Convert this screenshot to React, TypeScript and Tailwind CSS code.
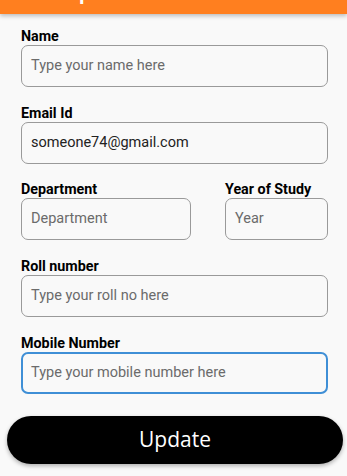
import React from "react";

function Label({ children }: { children: React.ReactNode }) {
  return (
    <div className="h-[17px] text-[14.3px] leading-[17px] font-bold text-black">
      {children}
    </div>
  );
}

function Field({
  text,
  value,
  focused,
  className,
}: {
  text: string;
  value?: boolean;
  focused?: boolean;
  className?: string;
}) {
  return (
    <div
      className={
        "h-[42px] rounded-[7px] flex items-center text-[14.5px] bg-[#f9f9f9] " +
        (focused ? "border-2 border-[#3f8fd6] px-[8px] " : "border border-[#9a9a9a] px-[9px] ") +
        (value ? "text-[#222] " : "text-[#6b6b6b] ") +
        (className ?? "")
      }
    >
      {text}
    </div>
  );
}

export default function App() {
  return (
    <div
      className="w-[347px] h-[476px] bg-[#f9f9f9] overflow-hidden flex flex-col"
      style={{ fontFamily: "Roboto, 'Liberation Sans', sans-serif" }}
    >
      <div className="h-[14px] bg-[#ff7f1f] shadow-[0_2px_4px_rgba(0,0,0,0.25)] overflow-hidden relative z-10 shrink-0">
        <div className="text-white text-[20px] font-bold leading-[20px] mt-[-17px] ml-[66px]">
          Update Profile
        </div>
      </div>
      <div className="pl-[21px] pr-[19px] pt-[14px] flex flex-col">
        <Label>Name</Label>
        <Field text="Type your name here" />
        <div className="h-[18px]" />
        <Label>Email Id</Label>
        <Field text="someone74@gmail.com" value />
        <div className="h-[17px]" />
        <div className="flex gap-[34px]">
          <div className="w-[170px] flex flex-col">
            <Label>Department</Label>
            <Field text="Department" />
          </div>
          <div className="w-[103px] flex flex-col">
            <Label>Year of Study</Label>
            <Field text="Year" />
          </div>
        </div>
        <div className="h-[18px]" />
        <Label>Roll number</Label>
        <Field text="Type your roll no here" />
        <div className="h-[18px]" />
        <Label>Mobile Number</Label>
        <Field text="Type your mobile number here" focused />
      </div>
      <div className="px-[7px] pt-[22px]">
        <button
          className="w-[336px] h-[48px] rounded-full bg-black text-white text-[21px] shadow-[0_2px_4px_rgba(0,0,0,0.3)] flex items-center justify-center"
          style={{ fontFamily: "'Open Sans', sans-serif" }}
        >
          Update
        </button>
      </div>
    </div>
  );
}
